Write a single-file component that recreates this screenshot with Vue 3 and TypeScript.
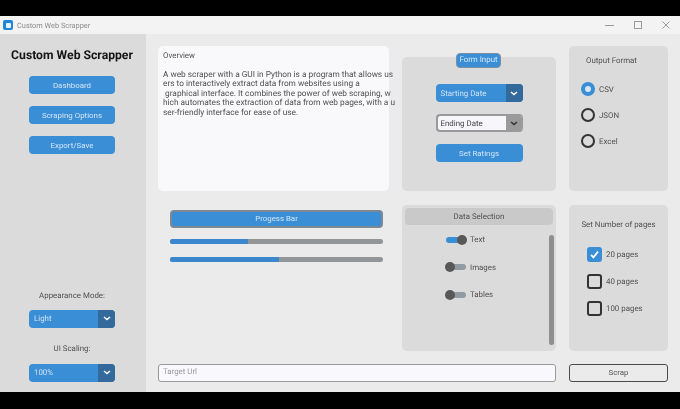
<script setup lang="ts">
const navItems: string[] = ['Dashboard', 'Scraping Options', 'Export/Save']
const formats = [
  { label: 'CSV', on: true },
  { label: 'JSON', on: false },
  { label: 'Excel', on: false },
]
const toggles = [
  { label: 'Text', on: true },
  { label: 'Images', on: false },
  { label: 'Tables', on: false },
]
const pages = [
  { label: '20 pages', on: true },
  { label: '40 pages', on: false },
  { label: '100 pages', on: false },
]
const bars: number[] = [36.6, 51.2]
const overview = `A web scraper with a GUI in Python is a program that allows us
ers to interactively extract data from websites using a
 graphical interface. It combines the power of web scraping, w
hich automates the extraction of data from web pages, with a u
ser-friendly interface for ease of use.`
</script>

<template>
  <div class="screen">
    <div class="band top"></div>
    <header class="titlebar">
      <span class="app-icon"><span></span></span>
      <span class="app-name">Custom Web Scrapper</span>
      <div class="controls">
        <svg width="10" height="10" viewBox="0 0 10 10"><path d="M0 5.5h9" stroke="#9a9a9a" fill="none" /></svg>
        <svg width="10" height="10" viewBox="0 0 10 10"><rect x="1.5" y="1.5" width="7" height="7" stroke="#9a9a9a" fill="none" /></svg>
        <svg width="10" height="10" viewBox="0 0 10 10"><path d="M1.5 1.5l7 7M8.5 1.5l-7 7" stroke="#9a9a9a" fill="none" /></svg>
      </div>
    </header>
    <div class="body">
      <aside class="sidebar">
        <h1>Custom Web Scrapper</h1>
        <button v-for="n in navItems" :key="n" class="btn nav">{{ n }}</button>
        <div class="grow"></div>
        <div class="side-label first">Appearance Mode:</div>
        <div class="combo blue side"><span>Light</span><i><svg width="8" height="5" viewBox="0 0 8 5"><path d="M1 1l3 2.6L7 1" stroke="#fff" stroke-width="1.5" fill="none" /></svg></i></div>
        <div class="side-label second">UI Scaling:</div>
        <div class="combo blue side"><span>100%</span><i><svg width="8" height="5" viewBox="0 0 8 5"><path d="M1 1l3 2.6L7 1" stroke="#fff" stroke-width="1.5" fill="none" /></svg></i></div>
      </aside>
      <main class="main">
        <section class="overview">
          <div class="ov-title">Overview</div>
          <div class="ov-text">{{ overview }}</div>
        </section>

        <section class="panel form">
          <div class="form-tag">Form Input</div>
          <div class="combo blue wide"><span>Starting Date</span><i><svg width="8" height="5" viewBox="0 0 8 5"><path d="M1 1l3 2.6L7 1" stroke="#fff" stroke-width="1.5" fill="none" /></svg></i></div>
          <div class="combo light wide"><span>Ending Date</span><i><svg width="8" height="5" viewBox="0 0 8 5"><path d="M1 1l3 2.6L7 1" stroke="#333" stroke-width="1.5" fill="none" /></svg></i></div>
          <button class="btn wide">Set Ratings</button>
        </section>

        <section class="panel output">
          <div class="out-title">Output Format</div>
          <div v-for="f in formats" :key="f.label" class="radio-row">
            <span class="radio" :class="{ on: f.on }"></span>{{ f.label }}
          </div>
        </section>

        <section class="progress">
          <button class="btn prog-btn">Progess Bar</button>
          <div v-for="(b, i) in bars" :key="i" class="track">
            <div class="fill" :style="{ width: b + '%' }"></div>
          </div>
        </section>

        <section class="panel data">
          <div class="data-head">Data Selection</div>
          <div class="data-body">
            <div class="toggles">
              <div v-for="t in toggles" :key="t.label" class="toggle-row">
                <span class="switch" :class="{ on: t.on }"><span></span></span>{{ t.label }}
              </div>
            </div>
            <div class="scroll"></div>
          </div>
        </section>

        <section class="panel pages">
          <div class="panel-title">Set Number of pages</div>
          <div v-for="p in pages" :key="p.label" class="check-row">
            <span class="check" :class="{ on: p.on }">
              <svg v-if="p.on" width="11" height="11" viewBox="0 0 11 11"><path d="M2 5.8l2.4 2.6L9 2.6" stroke="#fff" stroke-width="1.7" fill="none" /></svg>
            </span>{{ p.label }}
          </div>
        </section>

        <div class="url">Target Url</div>
        <button class="scrap">Scrap</button>
      </main>
    </div>
    <div class="band bottom"></div>
  </div>
</template>

<style scoped>
.screen {
  width: 680px;
  height: 409px;
  display: flex;
  flex-direction: column;
  overflow: hidden;
  background: #000;
  font-family: Roboto, "Liberation Sans", sans-serif;
  font-size: 7.9px;
  color: #505050;
  text-rendering: geometricPrecision;
}
.band { background: #000; flex: none; }
.top { height: 16px; }
.bottom { height: 17px; }
.titlebar {
  flex: none;
  height: 18px;
  background: #f3f3f3;
  display: flex;
  align-items: center;
  padding-left: 3px;
  filter: blur(0.45px);
}
.app-icon {
  width: 10px;
  height: 10px;
  border-radius: 2px;
  background: #1f86d6;
  display: flex;
  align-items: center;
  justify-content: center;
}
.app-icon span { width: 5px; height: 5px; border-radius: 1px; background: #e8f3fb; }
.app-name { margin-left: 4px; color: #8c8c8c; font-size: 7.4px; }
.controls {
  margin-left: auto;
  display: flex;
  gap: 18px;
  padding-right: 9px;
}
.body {
  flex: 1;
  display: flex;
  min-height: 0;
  filter: blur(0.45px);
}
.sidebar {
  flex: none;
  width: 146px;
  background: #dbdbdb;
  display: flex;
  flex-direction: column;
  align-items: center;
  padding: 0 2px 10.5px 0;
  box-sizing: border-box;
}
h1 {
  margin: 14px 0 13px;
  font-size: 12.2px;
  line-height: 15px;
  font-weight: 700;
  color: #151515;
  white-space: nowrap;
}
.btn {
  border: 0;
  padding: 0;
  height: 18px;
  border-radius: 4px;
  background: #3a8ed6;
  color: #d5e6f5;
  font: inherit;
  text-align: center;
}
.nav { width: 86px; margin-bottom: 12px; }
.grow { flex: 1; }
.side-label { line-height: 12px; text-align: center; }
.second { margin-top: 15px; margin-bottom: 9px; }
.first { margin-bottom: 8px; }
.combo {
  display: flex;
  height: 18px;
  border-radius: 4px;
  overflow: hidden;
  box-sizing: border-box;
}
.combo span { flex: 1; display: flex; align-items: center; padding-left: 5px; }
.combo i { width: 17px; display: flex; align-items: center; justify-content: center; }
.blue { background: #3a8ed6; color: #cfe3f4; }
.blue i { background: #33699b; }
.side { width: 86px; }
.light { border: 2px solid #999; background: #f7f7fb; color: #454545; border-right: 0; }
.light span { padding-left: 3px; }
.light i { background: #9a9a9a; }
.main {
  flex: 1;
  background: #ebebeb;
  display: grid;
  grid-template-columns: 231px 154px 99px;
  grid-template-rows: 145px 146px 17.5px;
  column-gap: 13px;
  row-gap: 13.5px;
  padding: 12px 12px 0;
  box-sizing: border-box;
  align-content: start;
}
.overview {
  background: #f9f9fb;
  border-radius: 5px;
  padding: 5px;
  box-sizing: border-box;
}
.ov-title { line-height: 10px; }
.ov-text {
  margin-top: 10px;
  white-space: pre;
  line-height: 9.4px;
  font-size: 8.3px;
  color: #505050;
}
.panel { background: #dbdbdb; border-radius: 5px; box-sizing: border-box; }
.form {
  margin-top: 11px;
  position: relative;
  display: flex;
  flex-direction: column;
  align-items: center;
  gap: 12px;
  padding-top: 27px;
}
.form-tag {
  position: absolute;
  top: -4px;
  left: 54px;
  width: 45px;
  height: 15px;
  box-sizing: border-box;
  border: 1.5px solid #7c8fa3;
  border-radius: 4px;
  background: #3a8ed6;
  color: #d5e6f5;
  text-align: center;
  line-height: 12px;
}
.wide { width: 87px; }
.output { padding: 9px 12px; }
.panel-title { line-height: 12px; text-align: center; }
.out-title { line-height: 12px; padding-left: 5px; margin-bottom: 15px; }
.radio-row {
  display: flex;
  align-items: center;
  height: 14px;
  margin-bottom: 12px;
  gap: 4px;
  padding-left: 0;
  margin-left: 0;
}
.radio {
  width: 14px;
  height: 14px;
  box-sizing: border-box;
  border-radius: 50%;
  border: 2px solid #333;
}
.radio.on { border: 4px solid #3a8ed6; background: #dbe8f3; }
.progress { padding: 20px 6px 0 12px; box-sizing: border-box; margin-top: -15px; }
.prog-btn {
  display: block;
  width: 213px;
  height: 18px;
  box-sizing: border-box;
  border: 2px solid #7c8894;
  margin-bottom: 11px;
}
.track {
  width: 213px;
  height: 5px;
  background: #929699;
  border-radius: 3px;
  overflow: hidden;
  margin-bottom: 13px;
}
.fill { height: 100%; background: #3a87cd; }
.data { padding: 3px 3px 0; display: flex; flex-direction: column; }
.data-head {
  height: 17px;
  background: #c9c9c9;
  border-radius: 4px;
  text-align: center;
  line-height: 17px;
}
.data-body { flex: 1; display: flex; margin-right: -1px; min-height: 0; }
.toggles { flex: 1; padding-top: 9px; padding-left: 41px; }
.toggle-row { display: flex; align-items: center; height: 12px; margin-bottom: 15.5px; gap: 4px; }
.switch {
  position: relative;
  width: 20px;
  height: 6px;
  border-radius: 3px;
  background: #929aa3;
  flex: none;
}
.switch.on { background: #3a8ed6; }
.switch span {
  position: absolute;
  top: -2px;
  left: -1px;
  width: 10px;
  height: 10px;
  border-radius: 50%;
  background: #585858;
}
.switch.on span { left: 11px; }
.scroll {
  width: 5px;
  margin-top: 10px;
  margin-bottom: 6px;
  border-radius: 3px;
  background: #8f8f8f;
}
.pages { padding-top: 14px; }
.pages .panel-title { margin-bottom: 16px; }
.check-row { display: flex; align-items: center; height: 15px; margin-bottom: 12px; padding-left: 18px; gap: 4px; }
.check {
  width: 15px;
  height: 15px;
  box-sizing: border-box;
  border-radius: 3px;
  border: 2px solid #333;
  display: flex;
  align-items: center;
  justify-content: center;
}
.check.on { background: #3a8ed6; border: 0; }
.url {
  grid-column: 1 / span 2;
  box-sizing: border-box;
  border: 1.5px solid #999;
  border-radius: 3px;
  background: #f9f9fd;
  color: #9a9a9a;
  padding-left: 4px;
  line-height: 14px;
}
.scrap {
  border: 1.5px solid #4b4b4b;
  border-radius: 3px;
  background: #ebebeb;
  padding: 0;
  font: inherit;
  color: #555;
}
</style>
